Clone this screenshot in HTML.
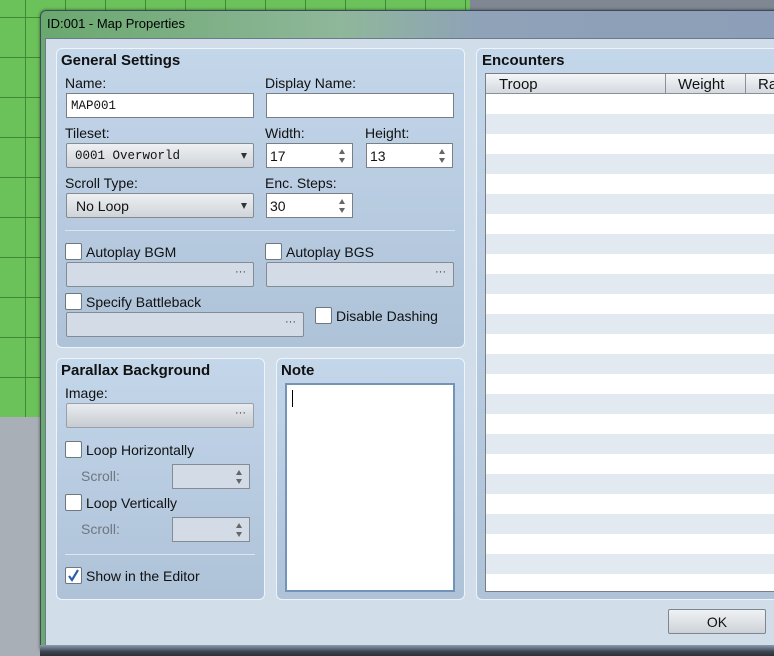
<!DOCTYPE html>
<html><head><style>
*{box-sizing:border-box;margin:0;padding:0}
body{width:774px;height:656px;overflow:hidden;position:relative;font-family:"Liberation Sans","DejaVu Sans",sans-serif;font-size:14px;color:#111;
background:#a9afb6;}
.grass{position:absolute;left:0;top:0;width:470px;height:417px;background-color:#6cc25a;
background-image:linear-gradient(#3f8a35 1px,transparent 1px),linear-gradient(90deg,#3f8a35 1px,transparent 1px);background-size:40px 40px;background-position:25px 17px}
.topgray{position:absolute;left:470px;top:0;width:304px;height:10px;background:#7f8892}
.dlg{position:absolute;left:40px;top:10px;width:740px;height:643px;border:1px solid #3b4a5c;border-radius:6px 0 0 6px;
background:linear-gradient(90deg,#6aa86e 0px,#8fb79a 300px,#8fa2b8 440px,#8d9eb8 740px);box-shadow:0 0 3px rgba(0,0,0,.5)}
.title{position:absolute;left:6px;top:5px;font-size:13px;color:#000}
.client{position:absolute;background:#d1dde9;border:1px solid #6b7a8c}
.panel{position:absolute;border:1px solid #eef4fa;border-radius:6px;background:linear-gradient(#c3d6ea,#aec2d8)}
.h{position:absolute;font-weight:bold;font-size:15px}
.l{position:absolute;font-size:14px}
.in{position:absolute;background:#fff;border:1px solid #7a7f87;height:25px;padding:5px 4px;font-size:14px}
.mono{font-family:"Liberation Mono","DejaVu Sans Mono",monospace;font-size:12.5px}
.dd{position:absolute;height:25px;border:1px solid #858b93;border-radius:2px;background:linear-gradient(#eef0f2,#d0d4d9);padding:5px 8px}
.dd:after{content:"";position:absolute;right:6px;top:9px;border:3.5px solid transparent;border-top:6px solid #333;border-bottom:0}
.btn{position:absolute;height:25px;border:1px solid #9aa0a8;border-radius:2px;background:linear-gradient(#dde3ea,#c9d1da)}
.btn span{position:absolute;right:7px;top:3px;font-size:11px;color:#333;letter-spacing:0}
.cb{position:absolute;width:17px;height:17px;background:#fff;border:1px solid #6f7780;border-radius:2px}
.sp{position:absolute;width:87px;height:25px;background:#fff;border:1px solid #7a7f87;padding:4px 3px;font-size:14px}
.sp:before{content:"";position:absolute;right:7px;top:5px;border:3.5px solid transparent;border-bottom:5px solid #666;border-top:0}
.sp:after{content:"";position:absolute;right:7px;top:14px;border:3.5px solid transparent;border-top:5px solid #666;border-bottom:0}
.dis{background:#d3dce6;border-color:#858b93}
.sep{position:absolute;height:1px;background:#8e9cab;border-bottom:1px solid #dbe6f0}
.grey{color:#6f7680}
</style></head><body>
<div class="grass"></div><div class="topgray"></div>
<div class="dlg"><div class="title">ID:001 - Map Properties</div></div>
<div class="client" style="left:45px;top:38px;width:735px;height:608px"></div>

<div class="panel" style="left:56px;top:48px;width:409px;height:300px"></div>
<div class="h" style="left:61px;top:52px">General Settings</div>
<div class="l" style="left:65px;top:75px">Name:</div>
<div class="in mono" style="left:66px;top:93px;width:188px">MAP001</div>
<div class="l" style="left:265px;top:75px">Display Name:</div>
<div class="in" style="left:266px;top:93px;width:188px"></div>
<div class="l" style="left:65px;top:125px">Tileset:</div>
<div class="dd mono" style="left:66px;top:143px;width:188px">0001 Overworld</div>
<div class="l" style="left:265px;top:125px">Width:</div>
<div class="sp" style="left:266px;top:143px">17</div>
<div class="l" style="left:365px;top:125px">Height:</div>
<div class="sp" style="left:366px;top:143px">13</div>
<div class="l" style="left:65px;top:175px">Scroll Type:</div>
<div class="dd" style="left:66px;top:193px;width:188px;padding-left:9px;font-size:14px;padding-top:4px">No Loop</div>
<div class="l" style="left:265px;top:175px">Enc. Steps:</div>
<div class="sp" style="left:266px;top:193px">30</div>
<div class="sep" style="left:65px;top:230px;width:390px"></div>
<div class="cb" style="left:65px;top:243px"></div><div class="l" style="left:86px;top:244px">Autoplay BGM</div>
<div class="btn dis" style="left:66px;top:262px;width:188px"><span>···</span></div>
<div class="cb" style="left:265px;top:243px"></div><div class="l" style="left:286px;top:244px">Autoplay BGS</div>
<div class="btn dis" style="left:266px;top:262px;width:188px"><span>···</span></div>
<div class="cb" style="left:65px;top:293px"></div><div class="l" style="left:86px;top:294px">Specify Battleback</div>
<div class="btn dis" style="left:66px;top:312px;width:238px"><span>···</span></div>
<div class="cb" style="left:315px;top:307px"></div><div class="l" style="left:336px;top:308px">Disable Dashing</div>

<div class="panel" style="left:56px;top:358px;width:209px;height:242px"></div>
<div class="h" style="left:61px;top:362px">Parallax Background</div>
<div class="l" style="left:65px;top:385px">Image:</div>
<div class="btn" style="left:66px;top:403px;width:188px;background:linear-gradient(#e9ecef,#c7ccd2)"><span>···</span></div>
<div class="cb" style="left:65px;top:441px"></div><div class="l" style="left:86px;top:442px">Loop Horizontally</div>
<div class="l grey" style="left:81px;top:468px">Scroll:</div>
<div class="sp dis" style="left:172px;top:464px;width:78px"></div>
<div class="cb" style="left:65px;top:494px"></div><div class="l" style="left:86px;top:495px">Loop Vertically</div>
<div class="l grey" style="left:81px;top:521px">Scroll:</div>
<div class="sp dis" style="left:172px;top:517px;width:78px"></div>
<div class="sep" style="left:65px;top:554px;width:190px"></div>
<div class="cb" style="left:65px;top:567px"><svg width="15" height="15" style="position:absolute;left:0;top:0"><path d="M3 8 L6 12 L12 2" stroke="#2c5fb0" stroke-width="2.2" fill="none"/></svg></div>
<div class="l" style="left:86px;top:568px">Show in the Editor</div>

<div class="panel" style="left:276px;top:358px;width:189px;height:242px"></div>
<div class="h" style="left:281px;top:362px">Note</div>
<div style="position:absolute;left:285px;top:383px;width:170px;height:209px;background:#fff;border:2px solid #7393b8"><div style="position:absolute;left:5px;top:5px;width:1px;height:17px;background:#000"></div></div>

<div class="panel" style="left:476px;top:48px;width:310px;height:552px"></div>
<div class="h" style="left:482px;top:52px">Encounters</div>
<div style="position:absolute;left:485px;top:73px;width:300px;height:519px;border:1px solid #7a7f87;
background:repeating-linear-gradient(#fff 0 20px,#e2e9f0 20px 40px);background-position:0 20px"></div>
<div style="position:absolute;left:486px;top:74px;width:290px;height:20px;background:linear-gradient(#f4f6f8,#d4d9df);border-bottom:1px solid #8a9098"></div>
<div class="l" style="left:499px;top:76px;font-size:15px">Troop</div>
<div style="position:absolute;left:665px;top:74px;width:1px;height:19px;background:#8a9098"></div>
<div class="l" style="left:678px;top:76px;font-size:15px">Weight</div>
<div style="position:absolute;left:745px;top:74px;width:1px;height:19px;background:#8a9098"></div>
<div class="l" style="left:758px;top:76px;font-size:15px">Ra</div>

<div class="btn" style="left:668px;top:609px;width:98px;height:25px;background:linear-gradient(#f0f2f4,#cdd2d8);border-color:#80868e;text-align:center;padding-top:4px;font-size:14px">OK</div>
<div style="position:absolute;left:40px;top:645px;width:734px;height:11px;background:linear-gradient(#8e9cb0,#3c4450 60%,#2b3038)"></div>
</body></html>
